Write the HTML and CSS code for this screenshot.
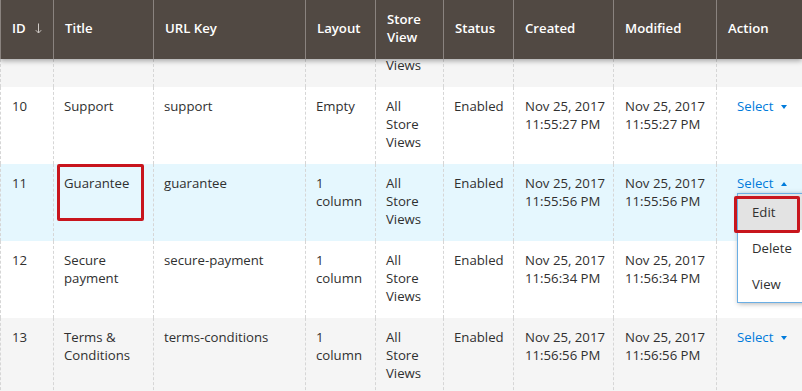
FILE: index.html
```html
<!DOCTYPE html>
<html lang="en">
<head>
<meta charset="utf-8">
<title>Pages grid</title>
<link rel="stylesheet" href="styles.css">
</head>
<body>
<div class="grid">
  <div class="head">
    <div class="th">ID <svg class="sort" width="7" height="11" viewBox="0 0 7 11"><path d="M3.5 0.5V10M0.8 7.2L3.5 10L6.2 7.2" fill="none" stroke="#cfcac6" stroke-width="1"/></svg></div>
    <div class="th">Title</div>
    <div class="th">URL Key</div>
    <div class="th">Layout</div>
    <div class="th">Store<br>View</div>
    <div class="th">Status</div>
    <div class="th">Created</div>
    <div class="th">Modified</div>
    <div class="th">Action</div>
  </div>
  <div class="body">
    <div class="row gray partial">
      <div class="td"></div>
      <div class="td"></div>
      <div class="td"></div>
      <div class="td"></div>
      <div class="td"><span class="tail">Views</span></div>
      <div class="td"></div>
      <div class="td"></div>
      <div class="td"></div>
      <div class="td"></div>
    </div>
    <div class="row">
      <div class="td">10</div>
      <div class="td">Support</div>
      <div class="td">support</div>
      <div class="td">Empty</div>
      <div class="td">All<br>Store<br>Views</div>
      <div class="td">Enabled</div>
      <div class="td nw">Nov 25, 2017<br>11:55:27 PM</div>
      <div class="td nw">Nov 25, 2017<br>11:55:27 PM</div>
      <div class="td act"><span class="select">Select <i class="tri down"></i></span></div>
    </div>
    <div class="row blue">
      <div class="td">11</div>
      <div class="td mark-cell">Guarantee<span class="mark mark-title"></span></div>
      <div class="td">guarantee</div>
      <div class="td">1<br>column</div>
      <div class="td">All<br>Store<br>Views</div>
      <div class="td">Enabled</div>
      <div class="td nw">Nov 25, 2017<br>11:55:56 PM</div>
      <div class="td nw">Nov 25, 2017<br>11:55:56 PM</div>
      <div class="td act open"><span class="select">Select <i class="tri up"></i></span>
        <ul class="menu">
          <li class="item hover">Edit<span class="mark mark-edit"></span></li>
          <li class="item">Delete</li>
          <li class="item">View</li>
        </ul>
      </div>
    </div>
    <div class="row">
      <div class="td">12</div>
      <div class="td">Secure<br>payment</div>
      <div class="td">secure-payment</div>
      <div class="td">1<br>column</div>
      <div class="td">All<br>Store<br>Views</div>
      <div class="td">Enabled</div>
      <div class="td nw">Nov 25, 2017<br>11:56:34 PM</div>
      <div class="td nw">Nov 25, 2017<br>11:56:34 PM</div>
      <div class="td act"></div>
    </div>
    <div class="row gray">
      <div class="td">13</div>
      <div class="td">Terms &amp;<br>Conditions</div>
      <div class="td">terms-conditions</div>
      <div class="td">1<br>column</div>
      <div class="td">All<br>Store<br>Views</div>
      <div class="td">Enabled</div>
      <div class="td nw">Nov 25, 2017<br>11:56:56 PM</div>
      <div class="td nw">Nov 25, 2017<br>11:56:56 PM</div>
      <div class="td act"><span class="select">Select <i class="tri down"></i></span></div>
    </div>
  </div>
</div>
</body>
</html>
```

FILE: styles.css
```css
* { box-sizing: border-box; }
html, body {
  margin: 0;
  padding: 0;
  background: #fff;
  overflow: hidden;
}
body {
  font-family: "Open Sans", "Noto Sans", sans-serif;
  font-size: 13.2px;
  line-height: 18px;
  color: #303030;
}
.grid {
  width: 100%;
  height: 391px;
  display: flex;
  flex-direction: column;
  overflow: hidden;
}
.head, .row {
  display: grid;
  grid-template-columns: 53px 100px 152px 70px 68px 70px 100px 103px 1fr;
}
.head {
  height: 59px;
  flex: none;
  background: #514943;
  color: #fff;
  font-weight: 600;
  position: relative;
  z-index: 2;
  box-shadow: 0 2px 5px rgba(0, 0, 0, 0.32);
}
.th {
  display: flex;
  align-items: center;
  gap: 9px;
  padding: 0 4px 3px 11px;
  border-left: 1px solid #8a837f;
}
.sort { display: block; margin-top: 1px; }
.body {
  flex: 1;
  overflow: hidden;
}
.row {
  height: 77px;
  background: #fff;
}
.row.partial {
  height: 28px;
  overflow: hidden;
}
.row.partial .td { padding-top: 0; }
.tail {
  display: block;
  margin-top: -3px;
}
.row.gray { background: #f5f5f5; }
.row.blue { background: #e5f7fe; }
.td {
  padding: 10px 2px 0 10px;
  border-left: 1px dashed #d6d6d6;
}
.td:first-child { padding-left: 11px; }
.td.nw { white-space: nowrap; padding-left: 11px; }
.td.act {
  padding-left: 20px;
  position: relative;
}
.select {
  color: #007bdb;
  display: inline-flex;
  align-items: center;
  gap: 8px;
}
.tri {
  display: inline-block;
  width: 0;
  height: 0;
  border-left: 3.5px solid transparent;
  border-right: 3.5px solid transparent;
  margin-top: 1px;
}
.tri.down { border-top: 4.5px solid #007bdb; }
.tri.up { border-bottom: 4.5px solid #007bdb; }
.mark-cell { position: relative; }
.mark {
  position: absolute;
  border: 3px solid #c8151d;
  border-radius: 2px;
  pointer-events: none;
}
.mark-title {
  left: 3px;
  top: 0;
  width: 87px;
  height: 57px;
}
.menu {
  position: absolute;
  left: 20px;
  top: 29px;
  width: 100px;
  margin: 0;
  padding: 0;
  list-style: none;
  background: #fff;
  border: 1px solid #6aaee4;
  box-shadow: 1px 1px 5px rgba(0, 0, 0, 0.3);
  z-index: 3;
}
.item {
  height: 36px;
  display: flex;
  align-items: center;
  padding-left: 14px;
  color: #303030;
  position: relative;
}
.item.hover { background: #e3e3e3; }
.mark-edit {
  left: -4px;
  top: 2px;
  width: 66px;
  height: 37px;
}
```
